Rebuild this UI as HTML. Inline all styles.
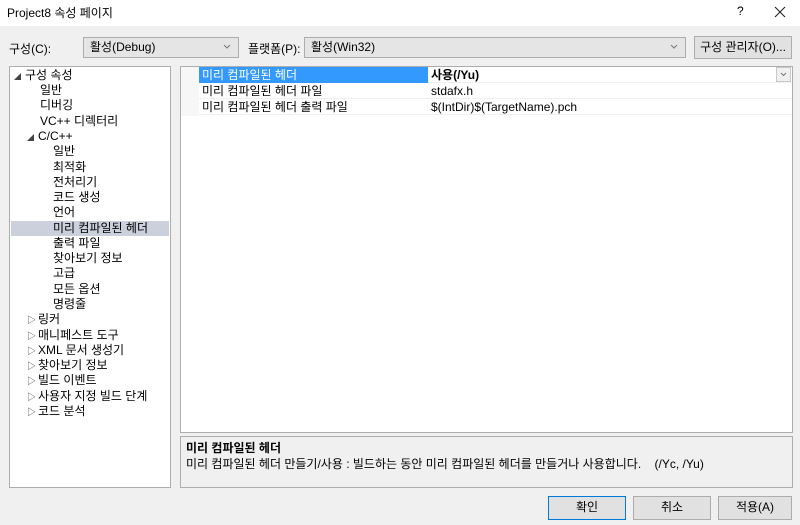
<!DOCTYPE html>
<html><head><meta charset="utf-8"><style>
*{box-sizing:border-box;margin:0;padding:0}
body{width:800px;height:525px;background:#f0f0f0;font-family:"Segoe UI","Liberation Sans","Noto Sans CJK KR",sans-serif;font-size:12px;color:#000;position:relative;overflow:hidden}
.a{position:absolute;white-space:nowrap}
.combo{position:absolute;height:21px;border:1px solid #adadad;background:#e5e5e5;padding:2px 6px;line-height:15px}
.chev{position:absolute;right:6px;top:5px;width:10px;height:8px}
.btn{position:absolute;height:24px;border:1px solid #adadad;background:#e1e1e1;text-align:center;line-height:21px}
.tree div{position:absolute;height:15px;line-height:15px;white-space:nowrap}
.row{position:absolute;left:18px;right:0;height:16px;line-height:16px;border-bottom:1px solid #f0f0f0}
.tri{font-size:9px;color:#444;display:inline-block;width:11px}
</style></head><body>
<div class="a" style="left:0;top:0;width:800px;height:26px;background:#fff"></div>
<div class="a" style="left:7px;top:4px">Project8 속성 페이지</div>
<div class="a" style="left:737px;top:4px">?</div>
<svg class="a" style="left:774px;top:6px" width="12" height="12"><path d="M1 1L11 11M11 1L1 11" stroke="#222" stroke-width="1.1"/></svg>

<div class="a" style="left:9px;top:40px">구성(C):</div>
<div class="combo" style="left:83px;top:37px;width:156px">활성(Debug)<svg class="chev" viewBox="0 0 10 8"><path d="M2 2L5 5L8 2" stroke="#777" fill="none"/></svg></div>
<div class="a" style="left:248px;top:40px">플랫폼(P):</div>
<div class="combo" style="left:304px;top:37px;width:382px">활성(Win32)<svg class="chev" viewBox="0 0 10 8"><path d="M2 2L5 5L8 2" stroke="#777" fill="none"/></svg></div>
<div class="btn" style="left:694px;top:36px;width:98px;height:23px">구성 관리자(O)...</div>

<div class="a tree" style="left:9px;top:66px;width:162px;height:422px;background:#fff;border:1px solid #adadad">
<div style="left:4px;top:1px"><span class="tri" style="font-size:7px">◢</span>구성 속성</div>
<div style="left:30px;top:16px">일반</div>
<div style="left:30px;top:31px">디버깅</div>
<div style="left:30px;top:47px">VC++ 디렉터리</div>
<div style="left:17px;top:62px"><span class="tri" style="font-size:7px">◢</span>C/C++</div>
<div style="left:43px;top:77px">일반</div>
<div style="left:43px;top:93px">최적화</div>
<div style="left:43px;top:108px">전처리기</div>
<div style="left:43px;top:123px">코드 생성</div>
<div style="left:43px;top:138px">언어</div>
<div style="left:1px;right:1px;top:154px;background:#ccd0dd;padding-left:42px">미리 컴파일된 헤더</div>
<div style="left:43px;top:169px">출력 파일</div>
<div style="left:43px;top:184px">찾아보기 정보</div>
<div style="left:43px;top:199px">고급</div>
<div style="left:43px;top:215px">모든 옵션</div>
<div style="left:43px;top:230px">명령줄</div>
<div style="left:17px;top:245px"><span class="tri">▷</span>링커</div>
<div style="left:17px;top:261px"><span class="tri">▷</span>매니페스트 도구</div>
<div style="left:17px;top:276px"><span class="tri">▷</span>XML 문서 생성기</div>
<div style="left:17px;top:291px"><span class="tri">▷</span>찾아보기 정보</div>
<div style="left:17px;top:306px"><span class="tri">▷</span>빌드 이벤트</div>
<div style="left:17px;top:322px"><span class="tri">▷</span>사용자 지정 빌드 단계</div>
<div style="left:17px;top:337px"><span class="tri">▷</span>코드 분석</div>
</div>

<div class="a" style="left:180px;top:66px;width:613px;height:367px;background:#fff;border:1px solid #adadad">
<div class="a" style="left:0;top:0;width:18px;height:49px;background:#f7f7f7"></div>
<div class="row" style="top:0"><span class="a" style="left:0;width:229px;background:#3399ff;color:#fff;padding-left:3px;height:16px">미리 컴파일된 헤더</span><span class="a" style="left:230px;font-weight:bold;padding-left:2px">사용(/Yu)</span><span class="a" style="right:1px;top:0;width:15px;height:15px;border:1px solid #c8c8c8;background:#f0f0f0"><svg width="13" height="13" viewBox="0 0 13 13" style="position:absolute;left:0;top:0"><path d="M4 5L6.5 7.5L9 5" stroke="#777" fill="none"/></svg></span></div>
<div class="row" style="top:16px"><span class="a" style="left:3px">미리 컴파일된 헤더 파일</span><span class="a" style="left:232px">stdafx.h</span></div>
<div class="row" style="top:32px"><span class="a" style="left:3px">미리 컴파일된 헤더 출력 파일</span><span class="a" style="left:232px">$(IntDir)$(TargetName).pch</span></div>
</div>

<div class="a" style="left:180px;top:436px;width:613px;height:52px;background:#f0f0f0;border:1px solid #adadad">
<div class="a" style="left:5px;top:2px;font-weight:bold">미리 컴파일된 헤더</div>
<div class="a" style="left:5px;top:18px">미리 컴파일된 헤더 만들기/사용 : 빌드하는 동안 미리 컴파일된 헤더를 만들거나 사용합니다. &nbsp;&nbsp;&nbsp;(/Yc, /Yu)</div>
</div>

<div class="btn" style="left:548px;top:496px;width:78px;border:1px solid #0078d7">확인</div>
<div class="btn" style="left:633px;top:496px;width:78px">취소</div>
<div class="btn" style="left:718px;top:496px;width:74px">적용(A)</div>
</body></html>
